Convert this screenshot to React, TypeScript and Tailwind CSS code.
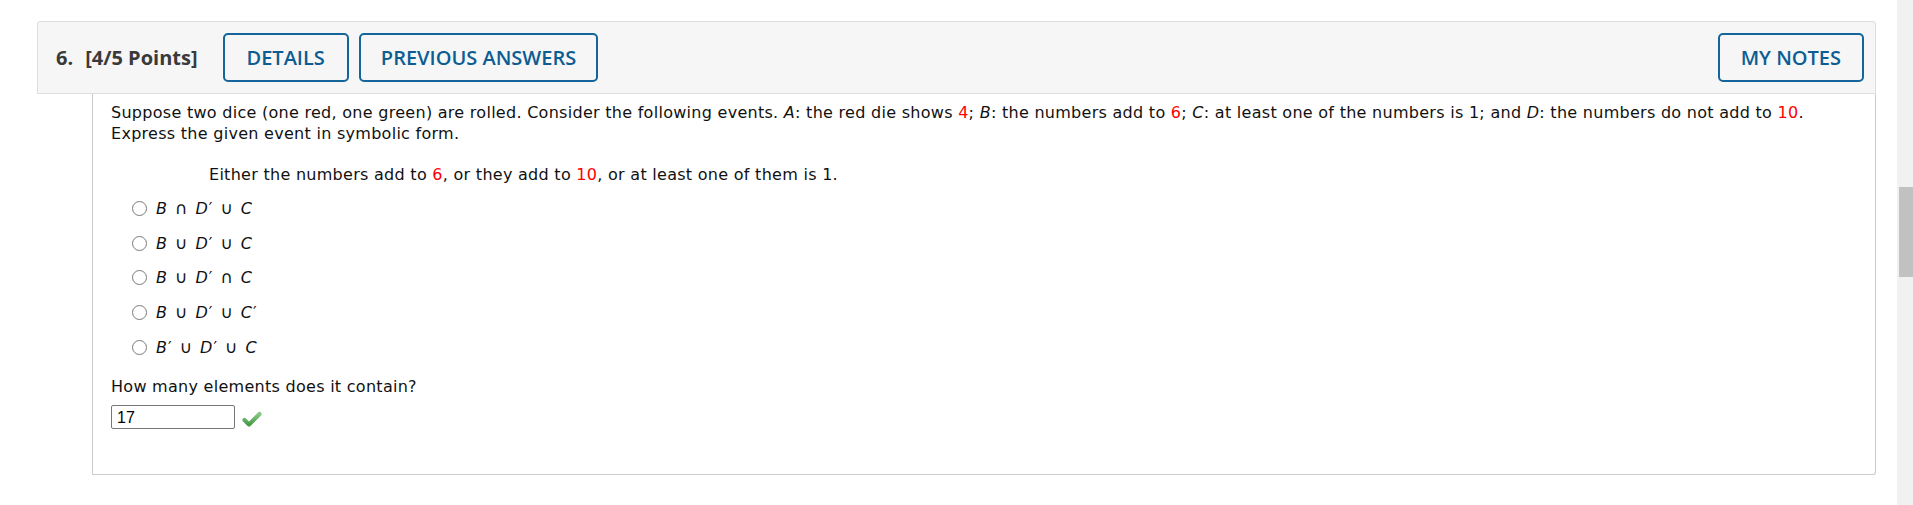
import React from "react";

const R = ({ children }: { children: React.ReactNode }) => (
  <span className="text-[#ff0000]">{children}</span>
);

const I = ({ children }: { children: React.ReactNode }) => (
  <span className="italic">{children}</span>
);

const V = ({ c, p }: { c: string; p?: boolean }) => (
  <span className="inline-block italic">
    {c}
    {p ? <span className="ml-[1px] not-italic">′</span> : null}
  </span>
);

const Op = ({ c }: { c: string }) => (
  <span className="mx-[8px] inline-block text-[17px] [font-family:'DejaVu_Sans',sans-serif]">
    {c}
  </span>
);

const options: React.ReactNode[] = [
  <>
    <V c="B" />
    <Op c="∩" />
    <V c="D" p />
    <Op c="∪" />
    <V c="C" />
  </>,
  <>
    <V c="B" />
    <Op c="∪" />
    <V c="D" p />
    <Op c="∪" />
    <V c="C" />
  </>,
  <>
    <V c="B" />
    <Op c="∪" />
    <V c="D" p />
    <Op c="∩" />
    <V c="C" />
  </>,
  <>
    <V c="B" />
    <Op c="∪" />
    <V c="D" p />
    <Op c="∪" />
    <V c="C" p />
  </>,
  <>
    <V c="B" p />
    <Op c="∪" />
    <V c="D" p />
    <Op c="∪" />
    <V c="C" />
  </>,
];

function HeaderButton({ label, extra }: { label: string; extra?: string }) {
  return (
    <button
      className={
        "h-[49px] rounded-[5px] border-2 border-[#13659b] bg-transparent text-[20px] font-semibold text-[#0d5d92] [font-family:'Open_Sans',sans-serif] " +
        (extra ?? "px-[21px]")
      }
    >
      {label}
    </button>
  );
}

export default function App() {
  return (
    <div className="flex h-[505px] w-full bg-white">
      <div className="flex-1 pl-[37px] pr-[21px] pt-[21px]">
        <div className="flex h-[73px] items-center rounded-t-[3px] border border-[#dddddd] bg-[#f6f6f6] pl-[18px] pr-[11px]">
          <div className="flex items-center text-[20px] font-bold text-[#3a3a3a] [font-family:'Open_Sans',sans-serif]">
            <span>6.</span>
            <span className="ml-[12px]">[4/5 Points]</span>
          </div>
          <div className="ml-[25px] flex gap-[10px]">
            <HeaderButton label="DETAILS" extra="px-[22px]" />
            <HeaderButton label="PREVIOUS ANSWERS" extra="px-[20px]" />
          </div>
          <div className="ml-auto">
            <HeaderButton label="MY NOTES" />
          </div>
        </div>
        <div className="ml-[55px] h-[381px] rounded-br-[3px] border-x border-b border-[#cccccc] pl-[18px] pt-[8px] text-[16px] leading-[21px] tracking-[0.28px] text-[#111111] [font-family:'DejaVu_Sans',Verdana,sans-serif]">
          <p>
            Suppose two dice (one red, one green) are rolled. Consider the
            following events. <I>A</I>: the red die shows <R>4</R>; <I>B</I>:
            the numbers add to <R>6</R>; <I>C</I>: at least one of the numbers
            is 1; and <I>D</I>: the numbers do not add to <R>10</R>.
            <br />
            Express the given event in symbolic form.
          </p>
          <p className="mt-[20px] pl-[98px]">
            Either the numbers add to <R>6</R>, or they add to <R>10</R>, or at
            least one of them is 1.
          </p>
          <div className="mt-[6px] flex flex-col tracking-normal">
            {options.map((o, i) => (
              <div key={i} className="flex h-[34.7px] items-center pl-[21px]">
                <span className="h-[15px] w-[15px] shrink-0 rounded-full border border-[#7a7a7a] bg-white" />
                <span className="ml-[9px] flex items-center whitespace-pre">{o}</span>
              </div>
            ))}
          </div>
          <p className="mt-[12px]">How many elements does it contain?</p>
          <div className="mt-[8px] flex items-center">
            <div className="flex h-[24px] w-[124px] items-center rounded-[2px] border border-[#767676] px-[5px] text-[16px] tracking-normal text-black [font-family:'Liberation_Sans',Arial,sans-serif]">
              17
            </div>
            <svg width="20" height="17" viewBox="0 0 20 17" className="ml-[7px] mt-[4px]">
              <defs>
                <linearGradient id="ck" x1="0" y1="0" x2="0" y2="1">
                  <stop offset="0" stopColor="#86c886" />
                  <stop offset="1" stopColor="#4a9a4a" />
                </linearGradient>
              </defs>
              <path
                d="M2.5 9 L7 13.5 L17.5 3"
                fill="none"
                stroke="url(#ck)"
                strokeWidth="4.2"
                strokeLinecap="round"
                strokeLinejoin="round"
              />
            </svg>
          </div>
        </div>
      </div>
      <div className="w-[16px] bg-[#f1f1f1] pl-[2px] pt-[187px]">
        <div className="h-[90px] w-[14px] bg-[#c1c1c1]" />
      </div>
    </div>
  );
}
